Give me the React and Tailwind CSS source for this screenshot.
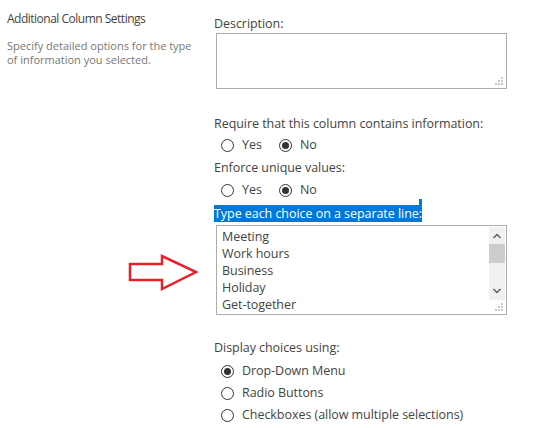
const Radio = ({ checked }) => (
  <span className="flex items-center justify-center w-[13px] h-[13px] rounded-full border border-[#333] bg-white shrink-0">
    {checked && <span className="w-[7px] h-[7px] rounded-full bg-[#333]" />}
  </span>
);

const Option = ({ checked, label, className = "" }) => (
  <div className={"flex items-center gap-[8px] " + className}>
    <Radio checked={checked} />
    <span>{label}</span>
  </div>
);

const Grip = () => (
  <svg width="8" height="8" viewBox="0 0 8 8" className="absolute right-[3px] bottom-[3px]">
    <rect x="6" y="0" width="2" height="2" fill="#c8c8c8" />
    <rect x="3" y="3" width="2" height="2" fill="#c8c8c8" />
    <rect x="6" y="3" width="2" height="2" fill="#c8c8c8" />
    <rect x="0" y="6" width="2" height="2" fill="#c8c8c8" />
    <rect x="3" y="6" width="2" height="2" fill="#c8c8c8" />
    <rect x="6" y="6" width="2" height="2" fill="#c8c8c8" />
  </svg>
);

const choices = ["Meeting", "Work hours", "Business", "Holiday", "Get-together"];

export default function App() {
  return (
    <div
      className="relative w-[545px] h-[428px] bg-white overflow-hidden flex text-[#444]"
      style={{ fontFamily: "'Segoe UI', 'Open Sans', sans-serif" }}
    >
      {/* left description column */}
      <div className="w-[214px] pl-[7px] shrink-0">
        <div className="mt-[10px] h-[17px] leading-[17px] text-[12px] tracking-[-0.5px] text-[#444]">
          Additional Column Settings
        </div>
        <div className="mt-[12px] text-[11px] leading-[14px] text-[#777] w-[195px]">
          Specify detailed options for the type of information you selected.
        </div>
      </div>

      {/* right form column */}
      <div className="flex flex-col text-[12.5px] tracking-[-0.05px] text-[#444]">
        <div className="mt-[15px] h-[17px] leading-[17px]">Description:</div>
        <div className="relative mt-[1px] ml-[2px] w-[291px] h-[56px] border border-[#ababab] bg-white">
          <Grip />
        </div>

        <div className="mt-[26px] h-[17px] leading-[17px]">
          Require that this column contains information:
        </div>
        <div className="mt-[3px] h-[20px] flex items-center pl-[7px]">
          <Option label="Yes" className="w-[58px]" />
          <Option checked label="No" />
        </div>

        <div className="mt-[4px] h-[17px] leading-[17px]">Enforce unique values:</div>
        <div className="mt-[4px] h-[20px] flex items-center pl-[7px]">
          <Option label="Yes" className="w-[58px]" />
          <Option checked label="No" />
        </div>

        <div className="relative mt-[5px] h-[17px] leading-[17px]">
          <span className="bg-[#0078d7] text-white">Type each choice on a separate line:</span>
          <span className="absolute top-[-6px] ml-[-3px] w-[3px] h-[8px] bg-[#0078d7]" />
        </div>

        {/* choices box */}
        <div className="relative mt-[3px] ml-[2px] w-[291px] h-[90px] border border-[#ababab] bg-white flex">
          <div className="flex-1 pl-[5px] pt-[2px] leading-[17px] overflow-hidden">
            {choices.map((c) => (
              <div key={c}>{c}</div>
            ))}
          </div>
          <div className="w-[16px] mt-[1px] mr-[1px] h-[73px] bg-[#f0f0f0] flex flex-col items-center">
            <svg width="16" height="17" viewBox="0 0 16 17">
              <path d="M4.5 11 L8 7.5 L11.5 11" stroke="#606060" strokeWidth="1.5" fill="none" />
            </svg>
            <div className="w-[16px] h-[19px] bg-[#cdcdcd]" />
            <div className="flex-1" />
            <svg width="16" height="17" viewBox="0 0 16 17">
              <path d="M4.5 6 L8 9.5 L11.5 6" stroke="#606060" strokeWidth="1.5" fill="none" />
            </svg>
          </div>
          <Grip />
        </div>

        <div className="mt-[24px] h-[17px] leading-[17px]">Display choices using:</div>
        <div className="mt-[4px] pl-[7px] flex flex-col">
          <Option checked label="Drop-Down Menu" className="h-[22px]" />
          <Option label="Radio Buttons" className="h-[22px]" />
          <Option label="Checkboxes (allow multiple selections)" className="h-[22px]" />
        </div>
      </div>

      {/* red annotation arrow */}
      <svg
        width="72"
        height="40"
        viewBox="0 0 72 40"
        className="absolute left-[127px] top-[253px]"
      >
        <path
          d="M3 11 H35 V3 L69 19 L35 36 V27 H3 Z"
          fill="none"
          stroke="#e8202a"
          strokeWidth="2.5"
          strokeLinejoin="miter"
        />
      </svg>
    </div>
  );
}
